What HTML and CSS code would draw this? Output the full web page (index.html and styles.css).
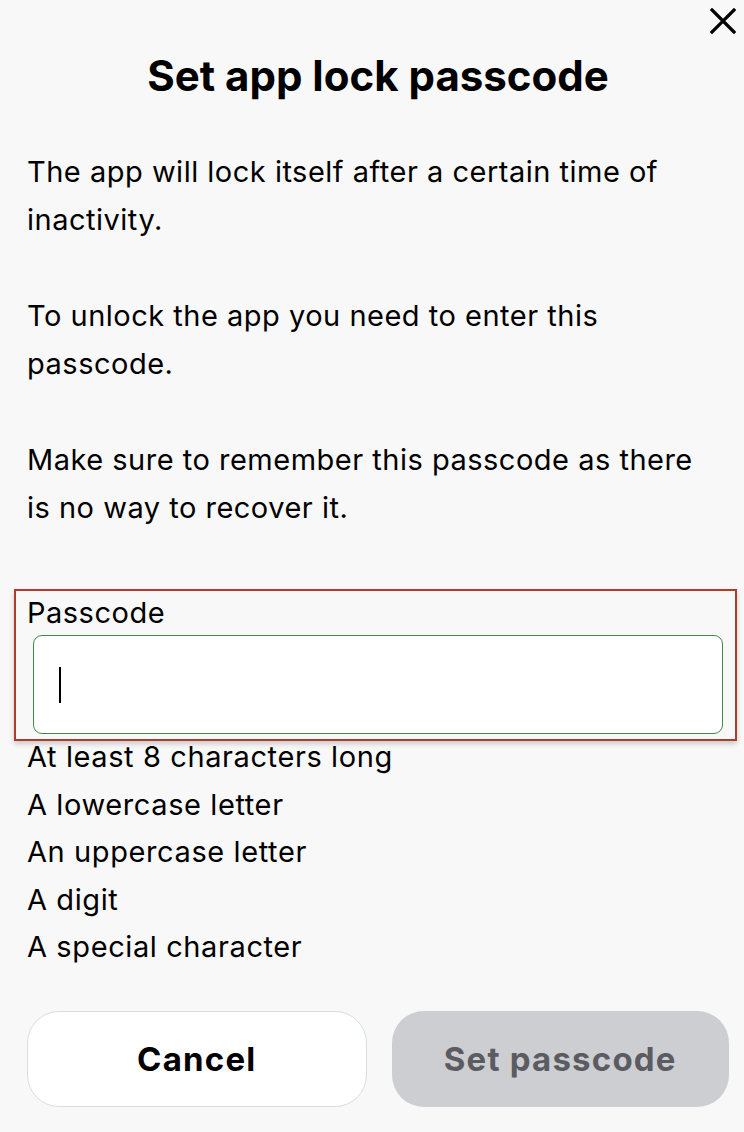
FILE: index.html
```html
<!DOCTYPE html>
<html lang="en">
<head>
<meta charset="utf-8">
<title>Set app lock passcode</title>
<link rel="stylesheet" href="styles.css">
</head>
<body>
<div class="sheet">
  <div class="topbar">
    <button class="close" aria-label="Close">
      <svg width="26" height="26" viewBox="0 0 26 26"><path d="M2 2 L24 24 M24 2 L2 24" stroke="#000" stroke-width="3.2" stroke-linecap="square" fill="none"/></svg>
    </button>
  </div>
  <h1 class="title">Set app lock passcode</h1>
  <div class="desc">
    <p>The app will lock itself after a certain time of inactivity.</p>
    <p>To unlock the app you need to enter this passcode.</p>
    <p>Make sure to remember this passcode as there is no way to recover it.</p>
  </div>
  <div class="field">
    <label class="label">Passcode</label>
    <div class="input"><span class="caret"></span></div>
  </div>
  <ul class="rules">
    <li>At least 8 characters long</li>
    <li>A lowercase letter</li>
    <li>An uppercase letter</li>
    <li>A digit</li>
    <li>A special character</li>
  </ul>
  <div class="actions">
    <button class="btn btn-cancel">Cancel</button>
    <button class="btn btn-set" disabled>Set passcode</button>
  </div>
</div>
</body>
</html>
```
FILE: styles.css
```css
html, body {
  margin: 0;
  padding: 0;
  background: #f8f8f8;
}
body {
  font-family: Inter, "Noto Sans", "Liberation Sans", sans-serif;
  color: #000;
  width: 744px;
  height: 1132px;
  overflow: hidden;
}
.sheet {
  padding: 0 15px 0 27px;
}
.topbar {
  display: flex;
  justify-content: flex-end;
  height: 34px;
  margin-right: -7px;
}
.close {
  background: none;
  border: 0;
  padding: 0;
  margin-top: 8px;
  width: 26px;
  height: 26px;
  display: block;
}
.close svg { display: block; }
.title {
  margin: 18px 0 0 0;
  font-size: 42px;
  line-height: 48px;
  font-weight: 700;
  text-align: center;
  letter-spacing: 0;
}
.desc {
  margin-top: 48px;
}
.desc p {
  margin: 0 0 48px 0;
  font-size: 29px;
  line-height: 48px;
  letter-spacing: 0.5px;
  padding-right: 10px;
}
.desc p:last-child { margin-bottom: 0; }
.field {
  margin: 59px -6px 0 -11px;
  padding: 0 0 5px 0;
  box-shadow: 0 0 0 2px #b13a2a, 0 3px 5px 2px rgba(0,0,0,0.18);
}
.label {
  display: block;
  padding-left: 11px;
  font-size: 29px;
  line-height: 44px;
  letter-spacing: 0.5px;
}
.input {
  margin: 0 12px 0 17px;
  height: 97px;
  background: #fff;
  border: 1px solid #3f8a45;
  border-radius: 9px;
  display: flex;
  align-items: center;
  padding-left: 25px;
}
.caret {
  display: block;
  width: 2px;
  height: 36px;
  background: #000;
}
.rules {
  list-style: none;
  margin: -6px 0 0 0;
  padding: 0;
}
.rules li {
  font-size: 29px;
  line-height: 47.5px;
  letter-spacing: 0.6px;
}
.actions {
  display: flex;
  gap: 25px;
  margin-top: 40px;
}
.btn {
  flex: 1;
  height: 96px;
  border-radius: 32px;
  font-family: Inter, "Noto Sans", "Liberation Sans", sans-serif;
  font-size: 33px;
  font-weight: 700;
  letter-spacing: 1.2px;
}
.btn-cancel {
  background: #fff;
  color: #000;
  border: 1.5px solid #d9dde1;
}
.btn-set {
  background: #cdced2;
  color: #5b5c62;
  border: 0;
}
```
